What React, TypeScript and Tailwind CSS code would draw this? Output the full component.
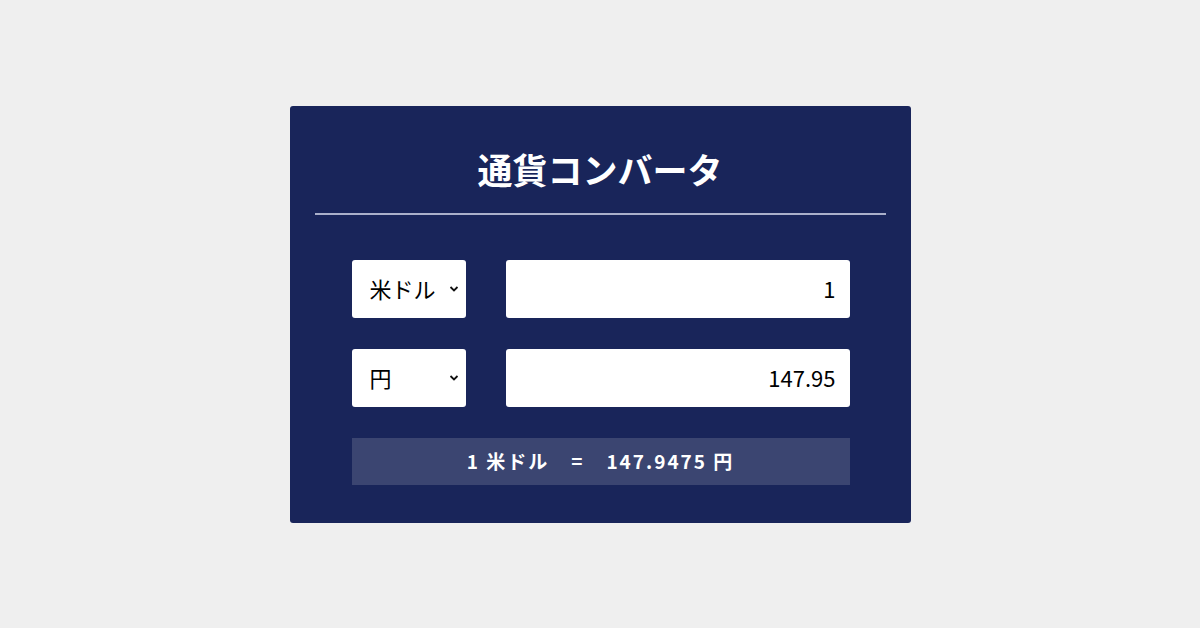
import React from "react";

const font = { fontFamily: '"Noto Sans CJK JP", "Noto Sans", sans-serif' };

function Chevron() {
  return (
    <svg width="10" height="7" viewBox="0 0 10 7" className="absolute right-[7px] top-1/2 -translate-y-1/2">
      <path d="M1.5 1.5 L5 5 L8.5 1.5" fill="none" stroke="#111" strokeWidth="1.8" />
    </svg>
  );
}

function Row({ cur, val }: { cur: string; val: string }) {
  return (
    <div className="flex items-center gap-[40px]">
      <div className="relative w-[114px] h-[58px] bg-white rounded-[3px] flex items-center pl-[18px] text-[22px] text-black">
        {cur}
        <Chevron />
      </div>
      <div className="w-[344px] h-[58px] bg-white rounded-[3px] flex items-center justify-end pr-[14px] text-[22px] text-black">
        {val}
      </div>
    </div>
  );
}

export default function App() {
  return (
    <div className="w-[1200px] h-[628px] bg-[#efefef] flex items-center justify-center" style={font}>
      <div className="w-[621px] bg-[#19255a] rounded-[3px] px-[25px] pt-[37px] pb-[38px]">
        <h1 className="text-white text-[35px] font-bold text-center leading-[51px]">通貨コンバータ</h1>
        <div className="h-[2px] bg-[#aab0ca] mt-[19px]" />
        <div className="w-[498px] ml-[37px] mt-[45px] flex flex-col gap-[31px]">
          <Row cur="米ドル" val="1" />
          <Row cur="円" val="147.95" />
          <div className="h-[47px] bg-[#3b4571] flex items-center justify-center text-white font-bold text-[19px] tracking-[2px]">
            <span>1 米ドル</span>
            <span className="mx-[22px]">=</span>
            <span>147.9475 円</span>
          </div>
        </div>
      </div>
    </div>
  );
}
